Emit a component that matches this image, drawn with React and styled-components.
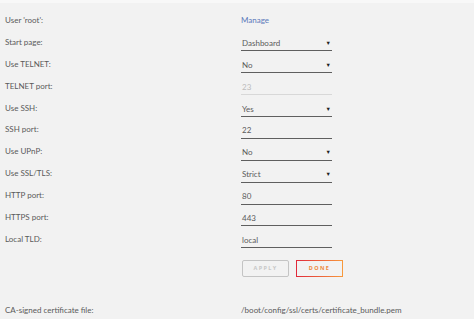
import React from 'react';
import styled, { createGlobalStyle } from 'styled-components';

const GlobalStyle = createGlobalStyle`
	body {
		margin: 0;
		background: #f2f2f2;
		font-family: Lato, 'Noto Sans', sans-serif;
		color: #5a5a5a;
	}
`;

const Page = styled.main`
	border-top: 3px solid #f8f8f8;
	padding-top: 6px;
	height: 310px;
`;

const Row = styled.div`
	display: grid;
	grid-template-columns: 241px 91px;
	align-items: center;
	height: 21.9px;
	font-size: 8px;
`;

const Label = styled.div`
	padding-left: 5px;
`;

const Link = styled.a`
	color: #5b79bb;
	text-decoration: none;
`;

const Field = styled.div`
	display: flex;
	align-items: center;
	justify-content: space-between;
	height: 15px;
	margin-top: 3px;
	padding-left: 1px;
	border-bottom: 1px solid ${(p) => (p.disabled ? '#d8d8d8' : '#5f5f5f')};
	color: ${(p) => (p.disabled ? '#bcbcbc' : '#5a5a5a')};
`;

const Arrow = styled.span`
	font-family: 'Noto Sans', sans-serif;
	font-size: 5.5px;
	color: #222;
	margin-right: 1px;
`;

const Buttons = styled.div`
	display: flex;
	gap: 7px;
	margin: 10px 0 0 242px;
`;

const Button = styled.button`
	width: 47px;
	height: 17px;
	padding: 0;
	background: transparent;
	font-family: 'Noto Sans', sans-serif;
	font-size: 5.5px;
	font-weight: 700;
	letter-spacing: 1.4px;
	border-radius: 2px;
	border: 1px solid #c4c4c4;
	color: #c8c8c8;
	${(p) =>
		p.primary &&
		`
		border: 1px solid transparent;
		border-image: linear-gradient(90deg, #e0283a, #f89a3c) 1;
		color: #ee8a3e;
	`}
`;

const CertRow = styled(Row)`
	margin-top: 22px;
`;

const rows = [
	{ label: 'Start page:', value: 'Dashboard', select: true },
	{ label: 'Use TELNET:', value: 'No', select: true },
	{ label: 'TELNET port:', value: '23', disabled: true },
	{ label: 'Use SSH:', value: 'Yes', select: true },
	{ label: 'SSH port:', value: '22' },
	{ label: 'Use UPnP:', value: 'No', select: true },
	{ label: 'Use SSL/TLS:', value: 'Strict', select: true },
	{ label: 'HTTP port:', value: '80' },
	{ label: 'HTTPS port:', value: '443' },
	{ label: 'Local TLD:', value: 'local' },
];

const App = () => {
	return (
		<>
			<GlobalStyle />
			<Page>
				<Row>
					<Label>User 'root':</Label>
					<Link href='#'>Manage</Link>
				</Row>
				{rows.map((r) => (
					<Row key={r.label}>
						<Label>{r.label}</Label>
						<Field disabled={r.disabled}>
							<span>{r.value}</span>
							{r.select && <Arrow>▼</Arrow>}
						</Field>
					</Row>
				))}
				<Buttons>
					<Button>APPLY</Button>
					<Button primary>DONE</Button>
				</Buttons>
				<CertRow>
					<Label>CA-signed certificate file:</Label>
					<span>/boot/config/ssl/certs/certificate_bundle.pem</span>
				</CertRow>
			</Page>
		</>
	);
};

export default App;
